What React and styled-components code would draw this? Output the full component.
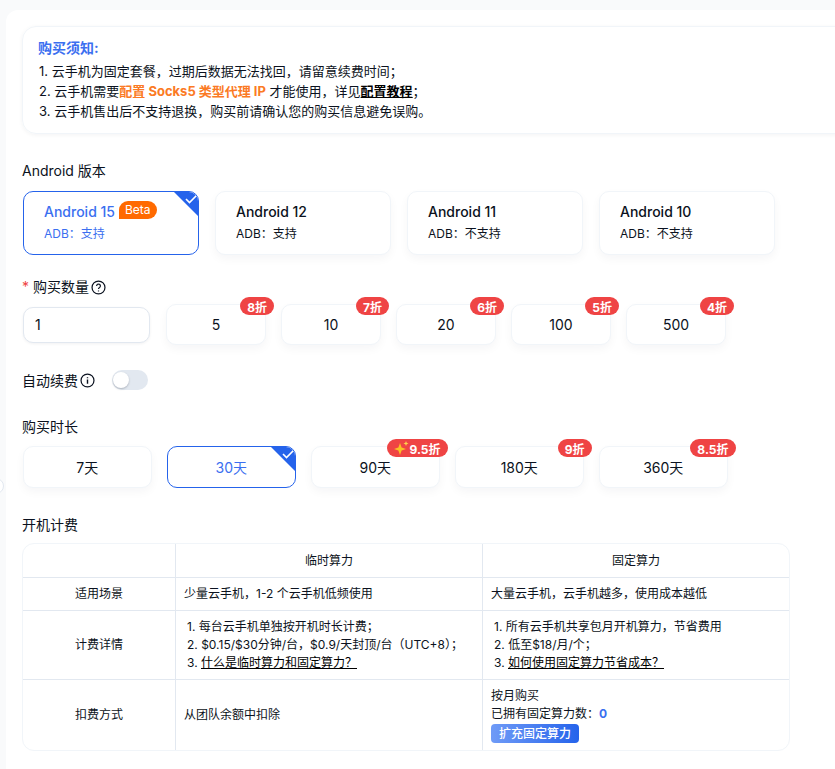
import styled, { createGlobalStyle, css } from 'styled-components';

const GlobalStyle = createGlobalStyle`
  html, body {
    margin: 0;
    height: 100%;
    overflow: hidden;
    background: #f9fafb;
  }
  body {
    font-family: Inter, "Noto Sans CJK SC", "Liberation Sans", sans-serif;
    color: #0b1220;
  }
  * {
    box-sizing: border-box;
  }
`;

const Page = styled.div`
  position: relative;
  width: 835px;
  height: 769px;
  overflow: hidden;
  padding: 10px 0 0 6px;
`;
const SideHandle = styled.div`
  position: absolute;
  left: -12px;
  top: 478px;
  width: 16px;
  height: 16px;
  border-radius: 50%;
  background: #fff;
  border: 1px solid #e2e8f0;
`;
const Panel = styled.main`
  width: 900px;
  height: 800px;
  padding: 16px 16px 0;
  background: #fff;
  border-radius: 12px 0 0 0;
`;
const Notice = styled.section`
  height: 108px;
  padding: 12px 15px 0;
  border: 1px solid #f1f5f9;
  border-radius: 14px;
  box-shadow: 0 1px 4px rgba(15, 23, 42, 0.05);
`;
const NoticeTitle = styled.div`
  font-size: 14px;
  line-height: 18px;
  font-weight: 700;
  color: #3b6ff0;
  margin-bottom: 4px;
`;
const NoticeLine = styled.div`
  padding-left: 1px;
  font-size: 13px;
  line-height: 20px;
`;
const Hot = styled.span`
  color: #fb7a24;
  font-weight: 700;
`;
const StrongLink = styled.a`
  color: #000;
  font-weight: 700;
  text-decoration: underline;
`;
const SectionTitle = styled.div`
  font-size: 14px;
  line-height: 18px;
  display: flex;
  align-items: center;
  gap: 1px;
  margin-top: ${(p) => p.$top}px;
`;
const Required = styled.span`
  color: #ef4444;
`;
const Row = styled.div`
  display: flex;
  align-items: center;
  gap: ${(p) => p.$gap}px;
  margin-top: ${(p) => p.$top}px;
  margin-left: 1px;
`;

const selected = css`
  border: 1px solid #2563eb;
  color: #3b6ff0;
  box-shadow: none;
`;
const Card = styled.div`
  position: relative;
  border: 1px solid #f1f5f9;
  border-radius: 10px;
  background: #fff;
  box-shadow: 0 4px 10px rgba(15, 23, 42, 0.04);
  ${(p) => p.$active && selected}
`;
const VersionCard = styled(Card)`
  width: 176px;
  height: 64px;
  padding: 10px 0 0 20px;
  overflow: hidden;
`;
const VersionName = styled.div`
  font-size: 14px;
  line-height: 20px;
  font-weight: 500;
  display: flex;
  align-items: center;
  gap: 4px;
`;
const BetaTag = styled.span`
  display: inline-block;
  height: 18px;
  margin-top: -5px;
  padding: 0 6px;
  border-radius: 9px 9px 9px 0;
  background: #ff6a00;
  color: #fff;
  font-size: 12px;
  line-height: 18px;
  font-weight: 400;
`;
const VersionAdb = styled.div`
  font-size: 12px;
  line-height: 18px;
  margin-top: 3px;
`;
const Corner = styled.svg`
  position: absolute;
  top: -1px;
  right: -1px;
  width: 26px;
  height: 26px;
`;
const QtyInput = styled.input`
  width: 127px;
  height: 36px;
  margin-right: 1px;
  padding: 0 11px;
  border: 1px solid #e2e8f0;
  border-radius: 10px;
  box-shadow: 0 1px 3px rgba(15, 23, 42, 0.06);
  font: inherit;
  font-size: 14px;
  color: #0b1220;
  outline: none;
`;
const OptionCard = styled(Card)`
  display: flex;
  align-items: center;
  justify-content: center;
  flex: none;
  width: ${(p) => p.$width}px;
  height: ${(p) => p.$height}px;
  font-size: 14px;
  ${(p) => p.$clip && 'overflow: hidden;'}
`;
const Discount = styled.span`
  position: absolute;
  top: -8px;
  right: -9px;
  display: flex;
  align-items: center;
  height: 18px;
  padding: 0 7px;
  border-radius: 9px;
  background: #ef4444;
  color: #fff;
  font-size: 12px;
  font-weight: 700;
  white-space: nowrap;
`;
const Sparkle = styled.svg`
  width: 16px;
  height: 16px;
  margin-left: -1px;
`;
const ToggleRow = styled.div`
  display: flex;
  align-items: center;
  margin-top: 25px;
  height: 20px;
  font-size: 14px;
`;
const HelpIcon = styled.svg`
  width: 15px;
  height: 15px;
  margin-left: ${(p) => p.$left}px;
  flex: none;
`;
const Toggle = styled.span`
  display: inline-block;
  position: relative;
  width: 36px;
  height: 20px;
  margin-left: 17px;
  border-radius: 10px;
  background: #e2e8f0;
`;
const Knob = styled.span`
  position: absolute;
  left: 1px;
  top: 2px;
  width: 16px;
  height: 16px;
  border-radius: 50%;
  background: #fff;
  box-shadow: 0 1px 2px rgba(15, 23, 42, 0.25);
`;
const TableWrap = styled.div`
  width: 768px;
  margin-top: 9px;
  border: 1px solid #f1f5f9;
  border-radius: 12px;
  overflow: hidden;
`;
const Table = styled.div`
  display: grid;
  grid-template-columns: 152px 307px 1fr;
  grid-template-rows: 33px 33px 69px 71px;
  font-size: 12px;
  line-height: 18px;
`;
const Cell = styled.div`
  display: flex;
  flex-direction: column;
  justify-content: center;
  padding: ${(p) => (p.$head ? '0' : '0 8px')};
  ${(p) => p.$head && 'align-items: center;'}
  border-top: ${(p) => (p.$first ? 'none' : '1px solid #e2e8f0')};
  border-left: ${(p) => (p.$lead ? 'none' : '1px solid #e2e8f0')};
`;
const DetailList = styled.div`
  padding-left: 3px;
`;
const Plain = styled.a`
  color: #000;
  text-decoration: underline;
`;
const Count = styled.span`
  color: #3b6ff0;
  font-weight: 700;
`;
const ExpandButton = styled.button`
  align-self: flex-start;
  height: 19px;
  margin-top: 1px;
  padding: 0 8px;
  border: none;
  border-radius: 4px;
  background: linear-gradient(90deg, #6f9bf7, #2563eb);
  color: #fff;
  font: inherit;
  font-size: 12px;
  font-weight: 500;
`;

const versions = [
  { name: 'Android 15', adb: 'ADB\uFF1A支持', beta: true, active: true },
  { name: 'Android 12', adb: 'ADB\uFF1A支持' },
  { name: 'Android 11', adb: 'ADB\uFF1A不支持' },
  { name: 'Android 10', adb: 'ADB\uFF1A不支持' }
];
const quantities = [
  { n: '5', off: '8折' },
  { n: '10', off: '7折' },
  { n: '20', off: '6折' },
  { n: '100', off: '5折' },
  { n: '500', off: '4折' }
];
const durations = [
  { n: '7天' },
  { n: '30天', active: true },
  { n: '90天', off: '9.5折', spark: true },
  { n: '180天', off: '9折' },
  { n: '360天', off: '8.5折' }
];

function CheckCorner() {
  return (
    <Corner viewBox="0 0 26 26">
      <path d="M0 0H26V26Z" fill="#2563eb" />
      <path
        d="M13 8l3.5 3.5 7-7"
        fill="none"
        stroke="#fff"
        strokeWidth="1.6"
      />
    </Corner>
  );
}

export default function App() {
  return (
    <Page>
      <GlobalStyle />
      <SideHandle />
      <Panel>
        <Notice>
          <NoticeTitle>购买须知:</NoticeTitle>
          <NoticeLine>{'1. 云手机为固定套餐\uFF0C过期后数据无法找回\uFF0C请留意续费时间\uFF1B'}</NoticeLine>
          <NoticeLine>
            2. 云手机需要<Hot>配置 Socks5 类型代理 IP</Hot> {'才能使用\uFF0C详见'}
            <StrongLink>配置教程</StrongLink>{'\uFF1B'}
          </NoticeLine>
          <NoticeLine>{'3. 云手机售出后不支持退换\uFF0C购买前请确认您的购买信息避免误购\u3002'}</NoticeLine>
        </Notice>

        <SectionTitle $top={28}>Android 版本</SectionTitle>
        <Row $gap={16} $top={11}>
          {versions.map((v) => (
            <VersionCard key={v.name} $active={v.active}>
              <VersionName>
                {v.name}
                {v.beta && <BetaTag>Beta</BetaTag>}
              </VersionName>
              <VersionAdb>{v.adb}</VersionAdb>
              {v.active && <CheckCorner />}
            </VersionCard>
          ))}
        </Row>

        <SectionTitle $top={23}>
          <span>
            <Required>*</Required> 购买数量
          </span>
          <HelpIcon $left={1} viewBox="0 0 16 16" fill="none" stroke="#0b1220" strokeWidth="1.3">
            <circle cx="8" cy="8" r="6.9" />
            <path d="M6 6.3a2 2 0 1 1 3.1 1.7c-.7.4-1.1.8-1.1 1.6" />
            <path d="M8 11.2v1" />
          </HelpIcon>
        </SectionTitle>
        <Row $gap={15} $top={8}>
          <QtyInput defaultValue="1" />
          {quantities.map((q) => (
            <OptionCard key={q.n} $width={100} $height={41}>
              {q.n}
              <Discount>{q.off}</Discount>
            </OptionCard>
          ))}
        </Row>

        <ToggleRow>
          自动续费
          <HelpIcon $left={2} viewBox="0 0 16 16" fill="none" stroke="#0b1220" strokeWidth="1.3">
            <circle cx="8" cy="8" r="6.9" />
            <path d="M8 7v4.5M8 4.4v1.2" strokeWidth="1.5" />
          </HelpIcon>
          <Toggle>
            <Knob />
          </Toggle>
        </ToggleRow>

        <SectionTitle $top={28}>购买时长</SectionTitle>
        <Row $gap={15.5} $top={10}>
          {durations.map((d) => (
            <OptionCard key={d.n} $width={128.5} $height={42} $active={d.active} $clip={d.active}>
              {d.n}
              {d.active && <CheckCorner />}
              {d.off && (
                <Discount>
                  {d.spark && (
                    <Sparkle viewBox="0 0 16 16">
                      <path d="M7 3l1.6 4.4L13 9l-4.4 1.6L7 15l-1.6-4.4L1 9l4.4-1.6z" fill="#fbbf24" />
                      <path d="M13 1l.7 1.8 1.8.7-1.8.7L13 6l-.7-1.8-1.8-.7 1.8-.7z" fill="#fcd34d" />
                    </Sparkle>
                  )}
                  {d.off}
                </Discount>
              )}
            </OptionCard>
          ))}
        </Row>

        <SectionTitle $top={28}>开机计费</SectionTitle>
        <TableWrap>
          <Table>
            <Cell $first $lead />
            <Cell $first $head>临时算力</Cell>
            <Cell $first $head>固定算力</Cell>

            <Cell $lead $head>适用场景</Cell>
            <Cell>{'少量云手机\uFF0C1-2 个云手机低频使用'}</Cell>
            <Cell>{'大量云手机\uFF0C云手机越多\uFF0C使用成本越低'}</Cell>

            <Cell $lead $head>计费详情</Cell>
            <Cell>
              <DetailList>
                <div>{'1. 每台云手机单独按开机时长计费\uFF1B'}</div>
                <div>{'2. $0.15/$30分钟/台\uFF0C$0.9/天封顶/台\uFF08UTC+8\uFF09\uFF1B'}</div>
                <div>3. <Plain>{'什么是临时算力和固定算力\uFF1F'}</Plain></div>
              </DetailList>
            </Cell>
            <Cell>
              <DetailList>
                <div>{'1. 所有云手机共享包月开机算力\uFF0C节省费用'}</div>
                <div>{'2. 低至$18/月/个\uFF1B'}</div>
                <div>3. <Plain>{'如何使用固定算力节省成本\uFF1F'}</Plain></div>
              </DetailList>
            </Cell>

            <Cell $lead $head>扣费方式</Cell>
            <Cell>从团队余额中扣除</Cell>
            <Cell>
              <div>按月购买</div>
              <div>{'已拥有固定算力数\uFF1A'}<Count>0</Count></div>
              <ExpandButton>扩充固定算力</ExpandButton>
            </Cell>
          </Table>
        </TableWrap>
      </Panel>
    </Page>
  );
}
